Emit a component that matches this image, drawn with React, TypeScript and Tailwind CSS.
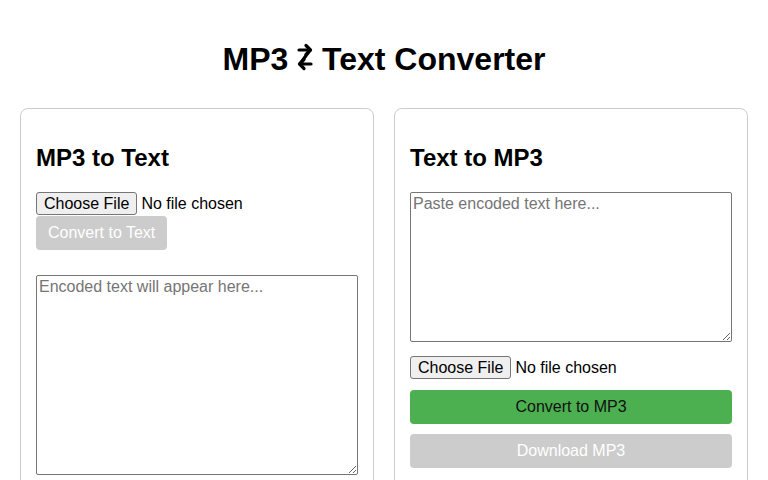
import React, { useState } from 'react';

// Z-shaped swap arrow used in the title
const SwapIcon = () => (
  <svg width="16" height="30" viewBox="0 0 16 30" className="inline-block align-[-2px]" aria-hidden="true">
    <g fill="none" stroke="#000" strokeWidth="3.2" strokeLinecap="round" strokeLinejoin="round">
      <path d="M2 8 H13 L3 22 H14" />
      <path d="M9 3.5 L13.5 8 L9 12.5" />
      <path d="M7 17.5 L2.5 22 L7 26.5" />
    </g>
  </svg>
);

const fileCls =
  'block text-base leading-[19px] text-black file:mr-[4px] file:rounded-[3px] file:border file:border-[#767676] file:bg-[#efefef] file:px-[7px] file:py-px file:text-black';

export default function App() {
  const [encoded, setEncoded] = useState('');
  const [pasted, setPasted] = useState('');

  return (
    <div className="min-h-screen bg-white px-5 text-black" style={{ fontFamily: '"Liberation Sans", Arial, sans-serif' }}>
      <h1 className="pt-[41px] pb-[30px] text-center text-[32px] font-bold leading-[37px]">
        MP3 <SwapIcon /> Text Converter
      </h1>

      <div className="grid grid-cols-2 gap-5">
        <div className="rounded-lg border border-[#ccc] p-[15px]">
          <h2 className="my-5 text-2xl font-bold leading-7">MP3 to Text</h2>
          <input type="file" accept=".mp3,audio/mpeg" className={fileCls} />
          <button
            disabled
            className="mt-px rounded bg-[#ccc] px-3 py-2 text-base leading-[18px] text-white"
          >
            Convert to Text
          </button>
          <textarea
            value={encoded}
            onChange={(e) => setEncoded(e.target.value)}
            placeholder="Encoded text will appear here..."
            className="mt-[25px] block h-[200px] w-full rounded-[2px] border border-[#767676] p-[2px] text-base leading-[18px] placeholder:text-[#757575]"
          />
        </div>

        <div className="rounded-lg border border-[#ccc] p-[15px]">
          <h2 className="my-5 text-2xl font-bold leading-7">Text to MP3</h2>
          <textarea
            value={pasted}
            onChange={(e) => setPasted(e.target.value)}
            placeholder="Paste encoded text here..."
            className="block h-[150px] w-full rounded-[2px] border border-[#767676] p-[2px] text-base leading-[18px] placeholder:text-[#757575]"
          />
          <div className="mt-[14px]">
            <input type="file" accept=".mp3,audio/mpeg" className={fileCls} />
          </div>
          <button className="mt-[11px] block w-full rounded bg-[#4caf50] px-3 py-2 text-base leading-[18px] text-[#111]">
            Convert to MP3
          </button>
          <button
            disabled
            className="mt-[10px] block w-full rounded bg-[#ccc] px-3 py-2 text-base leading-[18px] text-white"
          >
            Download MP3
          </button>
        </div>
      </div>
    </div>
  );
}
